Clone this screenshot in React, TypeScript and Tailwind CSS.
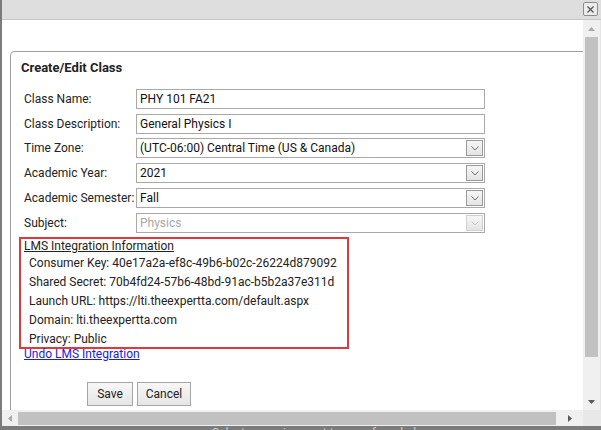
import type { ReactNode } from 'react';

const font = "font-['Roboto','Liberation_Sans',sans-serif]";

const Chevron = ({ disabled }: { disabled?: boolean }) => (
  <svg width="8" height="5" viewBox="0 0 8 5" className="block">
    <polyline
      points="0.5,0.5 4,4 7.5,0.5"
      fill="none"
      stroke={disabled ? '#c8c8c8' : '#707070'}
      strokeWidth="1"
    />
  </svg>
);

const TextField = ({ value }: { value: string }) => (
  <div className="w-[349px] h-[20px] border border-[#a9a9a9] bg-white flex items-center pl-[3px] text-[12px] text-[#111]">
    {value}
  </div>
);

const SelectField = ({ value, disabled }: { value: string; disabled?: boolean }) => (
  <div
    className={`w-[349px] h-[20px] border border-[#a9a9a9] bg-white flex items-center pl-[3px] pr-[1px] text-[12px] ${
      disabled ? 'text-[#a8a8a8]' : 'text-[#111]'
    }`}
  >
    <span className="flex-1">{value}</span>
    <div
      className={`w-[17px] h-[16px] border flex items-center justify-center bg-gradient-to-b from-[#f6f6f6] to-[#e4e4e4] ${
        disabled ? 'border-[#d0d0d0]' : 'border-[#9a9a9a]'
      }`}
    >
      <Chevron disabled={disabled} />
    </div>
  </div>
);

const Row = ({ label, children, gap }: { label: string; children: ReactNode; gap: string }) => (
  <div className={`flex items-center ml-[13px] ${gap}`}>
    <div className="w-[112px] text-[12px] text-[#222]">{label}</div>
    {children}
  </div>
);

const lmsInfo = [
  'Consumer Key: 40e17a2a-ef8c-49b6-b02c-26224d879092',
  'Shared Secret: 70b4fd24-57b6-48bd-91ac-b5b2a37e311d',
  'Launch URL: https://lti.theexpertta.com/default.aspx',
  'Domain: lti.theexpertta.com',
  'Privacy: Public',
];

const Arrow = ({ dir, light }: { dir: 'up' | 'down' | 'left' | 'right'; light?: boolean }) => {
  const pts = {
    up: '0,4 3.5,0 7,4',
    down: '0,0 3.5,4 7,0',
    left: '4,0 0,3.5 4,7',
    right: '0,0 4,3.5 0,7',
  }[dir];
  const vertical = dir === 'up' || dir === 'down';
  return (
    <svg width={vertical ? 7 : 4} height={vertical ? 4 : 7} className="block">
      <polygon points={pts} fill={light ? '#a9a9a9' : '#5a5a5a'} />
    </svg>
  );
};

export default function App() {
  return (
    <div className={`w-[601px] h-[430px] bg-[#7b7b7b] overflow-hidden ${font}`}>
      <div className="ml-[2px] w-[599px] h-[426px] flex flex-col bg-white">
        {/* title bar */}
        <div className="h-[20px] shrink-0 bg-[#dedede] border-b border-[#c6c6c6] flex justify-end pt-[2px] pr-[3px]">
          <div className="w-[15px] h-[14px] border border-[#8c8c8c] rounded-[2px] bg-[#ececec] flex items-center justify-center">
            <svg width="7" height="7" viewBox="0 0 7 7" className="block">
              <path d="M0.5 0.5 L6.5 6.5 M6.5 0.5 L0.5 6.5" stroke="#555" strokeWidth="1.3" />
            </svg>
          </div>
        </div>

        <div className="flex flex-1 min-h-0">
          {/* dialog content */}
          <div className="w-[581px] overflow-hidden">
            <div className="ml-[8px] mt-[31px] w-[620px] h-[400px] border-l border-t border-[#a0a0a0] rounded-tl-[5px]">
              <div className="pl-[10px] pt-[8px] text-[13px] leading-[16px] font-bold text-[#222]">
                Create/Edit Class
              </div>

              <Row label="Class Name:" gap="mt-[13px]">
                <TextField value="PHY 101 FA21" />
              </Row>
              <Row label="Class Description:" gap="mt-[5px]">
                <TextField value="General Physics I" />
              </Row>
              <Row label="Time Zone:" gap="mt-[4px]">
                <SelectField value="(UTC-06:00) Central Time (US & Canada)" />
              </Row>
              <Row label="Academic Year:" gap="mt-[5px]">
                <SelectField value="2021" />
              </Row>
              <Row label="Academic Semester:" gap="mt-[5px]">
                <SelectField value="Fall" />
              </Row>
              <Row label="Subject:" gap="mt-[5px]">
                <SelectField value="Physics" disabled />
              </Row>

              <div className="ml-[8px] mt-[4px] w-[330px] h-[112px] border-2 border-[#e2383c] pl-[3px] text-[12px] text-[#222]">
                <div className="h-[15px] leading-[15px] underline">LMS Integration Information</div>
                {lmsInfo.map((line) => (
                  <div key={line} className="h-[19px] leading-[19px] pl-[5px]">
                    {line}
                  </div>
                ))}
              </div>

              <div className="ml-[13px] -mt-[2px] leading-[14px] text-[12px]">
                <a href="#" className="text-[#1a1ae6] underline">
                  Undo LMS Integration
                </a>
              </div>

              <div className="flex ml-[76px] mt-[21px] gap-[4px]">
                <button className="w-[46px] h-[24px] border border-[#a6a6a6] bg-gradient-to-b from-[#f7f7f7] to-[#e6e6e6] text-[12px] text-[#222]">
                  Save
                </button>
                <button className="w-[54px] h-[24px] border border-[#a6a6a6] bg-gradient-to-b from-[#f7f7f7] to-[#e6e6e6] text-[12px] text-[#222]">
                  Cancel
                </button>
              </div>
            </div>
          </div>

          {/* vertical scrollbar */}
          <div className="w-[17px] bg-[#f0f0f0] flex flex-col items-center">
            <div className="h-[17px] flex items-center justify-center">
              <Arrow dir="up" light />
            </div>
            <div className="w-[13px] mt-[0px] h-[320px] bg-[#c1c1c1]" />
            <div className="flex-1" />
            <div className="h-[17px] flex items-center justify-center">
              <Arrow dir="down" />
            </div>
          </div>
          <div className="w-[1px] bg-[#e4e4e4]" />
        </div>

        {/* horizontal scrollbar */}
        <div className="h-[16px] shrink-0 flex bg-[#f0f0f0]">
          <div className="w-[581px] flex items-center">
            <div className="w-[16px] flex items-center justify-center">
              <Arrow dir="left" light />
            </div>
            <div className="w-[538px] h-[13px] bg-[#c1c1c1]" />
            <div className="flex-1 flex items-center justify-center">
              <Arrow dir="right" />
            </div>
          </div>
          <div className="flex-1 bg-[#e8e8e8]" />
        </div>
      </div>

      {/* page behind the dialog */}
      <div className="h-[4px] overflow-hidden pl-[212px] text-[12px] leading-[14px] text-[#cfcfcf]">
        Select an assignment to copy from below
      </div>
    </div>
  );
}
